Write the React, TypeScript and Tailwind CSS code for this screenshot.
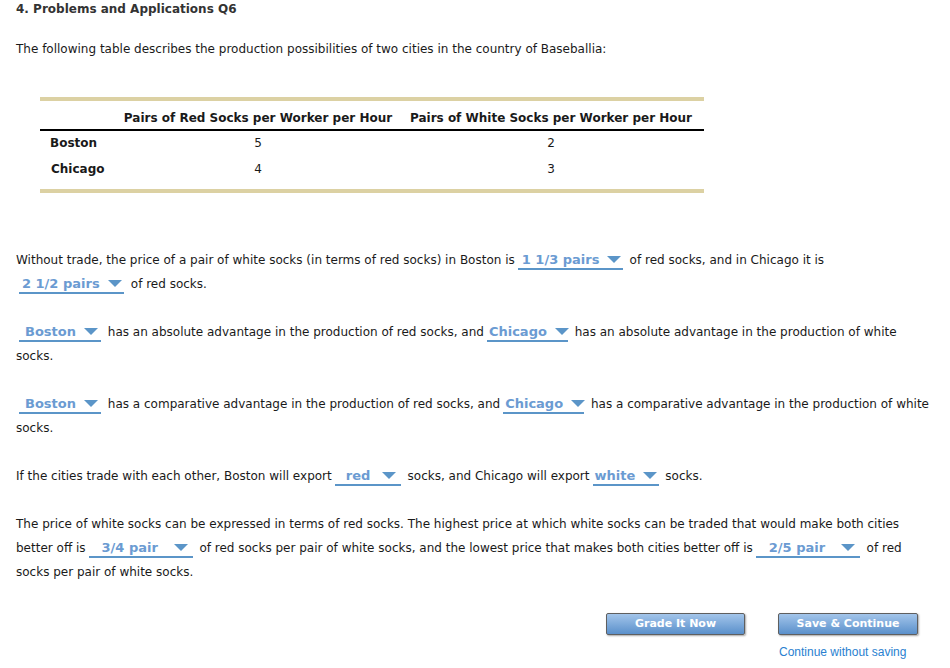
import React from 'react';

function Drop({ label, w, pl }: { label: string; w: string; pl: string }) {
    return (
        <span className={`inline-flex items-center justify-between whitespace-nowrap align-baseline h-[18px] border-b-2 border-[#5b95c8] pr-[5px] mx-[3px] ${w} ${pl}`}>
            <span className="font-bold text-[13px] text-[#6b9bd2] leading-none">{label}</span>
            <svg width="14" height="7" viewBox="0 0 14 7" className="ml-2 shrink-0">
                <path d="M0 0 L14 0 L7 7 Z" fill="#5b95c8" />
            </svg>
        </span>
    );
}

export default function App() {
    return (
        <div className="min-h-screen bg-white text-[12px] text-[#1a1a1a] font-['DejaVu_Sans',Verdana,sans-serif]">
            <div className="px-4">
                <h1 className="font-bold text-[#333] leading-[16px] pt-[1px]">4. Problems and Applications Q6</h1>

                <p className="mt-[24px] leading-[16px]">The following table describes the production possibilities of two cities in the country of Baseballia:</p>

                {/* tabela */}
                <div className="ml-6 mt-[40px] w-[664px] border-t-4 border-b-4 border-[#dcd1a3]">
                    <div className="grid grid-cols-[78px_280px_306px] border-b-2 border-black h-[30px] pt-[8px] font-bold">
                        <div></div>
                        <div className="text-center">Pairs of Red Socks per Worker per Hour</div>
                        <div className="text-center">Pairs of White Socks per Worker per Hour</div>
                    </div>
                    <div className="grid grid-cols-[78px_280px_306px] h-[24px] items-center">
                        <div className="pl-[10px] font-bold">Boston</div>
                        <div className="text-center">5</div>
                        <div className="text-center">2</div>
                    </div>
                    <div className="grid grid-cols-[78px_280px_306px] h-[27px] items-center">
                        <div className="pl-[11px] font-bold">Chicago</div>
                        <div className="text-center">4</div>
                        <div className="text-center">3</div>
                    </div>
                    <div className="h-[7px]"></div>
                </div>

                <div className="mt-[55px] leading-[24px] flex flex-col gap-[24px]">
                    <p>
                        Without trade, the price of a pair of white socks (in terms of red socks) in Boston is<Drop label="1 1/3 pairs" w="w-[105px]" pl="pl-[4px]" /> of red socks, and in Chicago it is
                        {' '}<Drop label="2 1/2 pairs" w="w-[105px]" pl="pl-[3px]" /> of red socks.
                    </p>
                    <p>
                        <Drop label="Boston" w="w-[82px]" pl="pl-[6px]" /> has an absolute advantage in the production of red socks, and<Drop label="Chicago" w="w-[81px]" pl="pl-[2px]" /> has an absolute advantage in the production of white socks.
                    </p>
                    <p>
                        <Drop label="Boston" w="w-[82px]" pl="pl-[6px]" /> has a comparative advantage in the production of red socks, and<Drop label="Chicago" w="w-[81px]" pl="pl-[2px]" /> has a comparative advantage in the production of white socks.
                    </p>
                    <p>
                        If the cities trade with each other, Boston will export<Drop label="red" w="w-[66px]" pl="pl-[11px]" /> socks, and Chicago will export<Drop label="white" w="w-[66px]" pl="pl-[2px]" /> socks.
                    </p>
                    <p>
                        The price of white socks can be expressed in terms of red socks. The highest price at which white socks can be traded that would make both cities better off is<Drop label="3/4 pair" w="w-[104px]" pl="pl-[13px]" /> of red socks per pair of white socks, and the lowest price that makes both cities better off is<Drop label="2/5 pair" w="w-[104px]" pl="pl-[13px]" /> of red socks per pair of white socks.
                    </p>
                </div>

                <div className="mt-[29px] flex justify-end pr-[16px] gap-[33px]">
                    <button className="w-[139px] h-[22px] rounded-[2px] border border-[#5f5f5f] bg-gradient-to-b from-[#a3c5ea] to-[#5a90cb] text-white font-bold text-[11px] shadow-[1px_1px_2px_rgba(0,0,0,0.35)]">
                        Grade It Now
                    </button>
                    <div className="flex flex-col items-start">
                        <button className="w-[140px] h-[22px] rounded-[2px] border border-[#5f5f5f] bg-gradient-to-b from-[#a3c5ea] to-[#5a90cb] text-white font-bold text-[11px] shadow-[1px_1px_2px_rgba(0,0,0,0.35)]">
                            Save &amp; Continue
                        </button>
                        <a className="mt-[8px] ml-[1px] text-[12px] text-[#2a7fd0] font-['Liberation_Sans',Arial,sans-serif]">Continue without saving</a>
                    </div>
                </div>
            </div>
        </div>
    );
}
